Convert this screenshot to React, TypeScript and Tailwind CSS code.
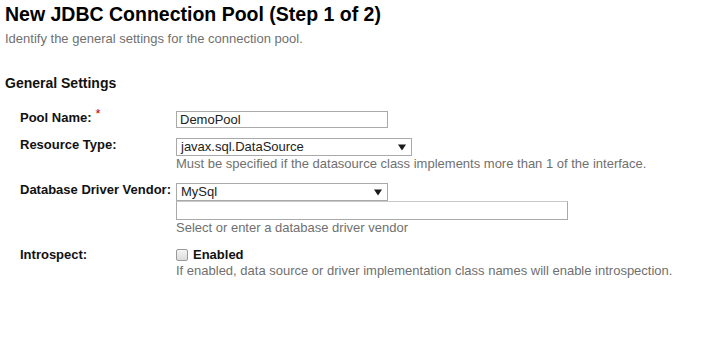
import React from 'react';

const Arrow = () => (
  <svg width="8" height="7" viewBox="0 0 8 7" className="shrink-0">
    <path d="M0 0.5 H8 L4 6.5 Z" fill="#1a1a1a" />
  </svg>
);

const Help = ({ children }: { children: React.ReactNode }) => (
  <div className="text-[13px] leading-[16px] text-[#707070] whitespace-nowrap">{children}</div>
);

const Label = ({ children }: { children: React.ReactNode }) => (
  <div className="w-[171px] shrink-0 pl-[15px] text-[13px] leading-[16px] font-bold text-[#111] whitespace-nowrap">
    {children}
  </div>
);

export default function App() {
  return (
    <div
      className="w-[725px] h-[358px] bg-white px-[5px] pt-[2px] overflow-hidden"
      style={{ fontFamily: '"Liberation Sans", Arial, sans-serif' }}
    >
      <h1 className="text-[19.5px] leading-[24px] font-bold text-black whitespace-nowrap">
        New JDBC Connection Pool (Step 1 of 2)
      </h1>
      <p className="mt-[5px] text-[13px] leading-[16px] text-[#707070]">
        Identify the general settings for the connection pool.
      </p>

      <h2 className="mt-[28px] text-[14px] leading-[17px] font-bold text-[#111]">General Settings</h2>

      <div className="mt-[18px] flex flex-col">
        {/* Pool Name */}
        <div className="flex items-start">
          <Label>
            Pool Name:
            <span className="ml-[4px] relative -top-[4px] text-[#c00000] font-normal">*</span>
          </Label>
          <div className="mt-px w-[212px] h-[17px] border border-[#a9a9a9] px-[3px] text-[13px] leading-[15px] text-[#222]">
            DemoPool
          </div>
        </div>

        {/* Resource Type */}
        <div className="mt-[9px] flex items-start">
          <Label>Resource Type:</Label>
          <div className="flex flex-col">
            <div className="mt-px w-[236px] h-[18px] border border-[#a9a9a9] pl-[4px] pr-[5px] flex items-center justify-between text-[13px] leading-[16px] text-[#222]">
              <span>javax.sql.DataSource</span>
              <Arrow />
            </div>
            <Help>Must be specified if the datasource class implements more than 1 of the interface.</Help>
          </div>
        </div>

        {/* Database Driver Vendor */}
        <div className="mt-[10px] flex items-start">
          <Label>Database Driver Vendor:</Label>
          <div className="flex flex-col">
            <div className="mt-px w-[212px] h-[18px] border border-[#a9a9a9] pl-[4px] pr-[5px] flex items-center justify-between text-[13px] leading-[16px] text-[#222]">
              <span>MySql</span>
              <Arrow />
            </div>
            <div className="w-[392px] h-[19px] border border-[#a9a9a9] border-t-[#c8c8c8]" />
            <Help>Select or enter a database driver vendor</Help>
          </div>
        </div>

        {/* Introspect */}
        <div className="mt-[11px] flex items-start">
          <Label>Introspect:</Label>
          <div className="flex flex-col">
            <div className="h-[16px] flex items-center gap-[5px]">
              <span className="w-[12px] h-[12px] rounded-[2px] border border-[#9a9a9a] bg-gradient-to-b from-[#f4f4f4] to-[#dcdcdc]" />
              <span className="text-[13px] leading-[16px] font-bold text-[#111]">Enabled</span>
            </div>
            <Help>If enabled, data source or driver implementation class names will enable introspection.</Help>
          </div>
        </div>
      </div>
    </div>
  );
}
